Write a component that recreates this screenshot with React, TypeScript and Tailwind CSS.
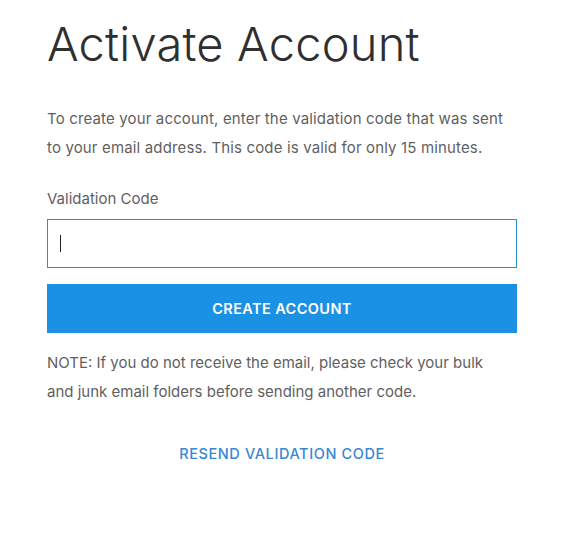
export default function App() {
  return (
    <div className="min-h-[555px] w-full bg-white font-['Inter',sans-serif]">
      <div className="w-[470px] ml-[47px] pt-[14px]">
        <h1 className="text-[47px] font-light leading-[60px] text-[#2f2f2f] tracking-[0.2px]">
          Activate Account
        </h1>

        <p className="mt-[30px] text-[15px] leading-[29px] tracking-[0.15px] text-[#5f5f5f]">
          To create your account, enter the validation code that was sent
          <br />
          to your email address. This code is valid for only 15 minutes.
        </p>

        <label className="mt-[24px] block text-[15px] leading-[26px] text-[#5f5f5f]">
          Validation Code
        </label>
        <div className="mt-[7px] flex h-[49px] items-center border border-[#2b90c8] px-[12px]">
          <span className="h-[17px] w-px bg-[#222]" />
        </div>

        <button className="mt-[16px] h-[49px] w-full bg-[#1a91e3] text-[14.5px] font-semibold tracking-[0.4px] text-white">
          CREATE ACCOUNT
        </button>

        <p className="mt-[15px] text-[15px] leading-[29px] text-[#5f5f5f]">
          NOTE: If you do not receive the email, please check your bulk
          <br />
          and junk email folders before sending another code.
        </p>

        <div className="mt-[35px] text-center">
          <a className="text-[14.5px] font-medium tracking-[0.6px] text-[#3a87d4]">
            RESEND VALIDATION CODE
          </a>
        </div>
      </div>
    </div>
  );
}
